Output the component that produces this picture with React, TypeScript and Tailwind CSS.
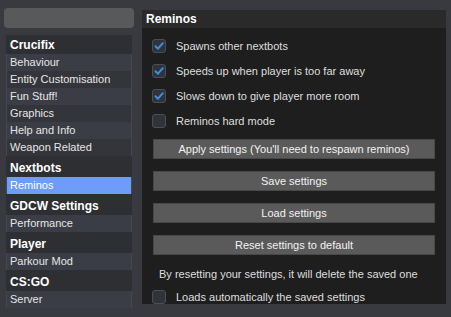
import React from 'react'

const categories = [
    { title: 'Crucifix', items: ['Behaviour', 'Entity Customisation', 'Fun Stuff!', 'Graphics', 'Help and Info', 'Weapon Related'] },
    { title: 'Nextbots', items: ['Reminos'] },
    { title: 'GDCW Settings', items: ['Performance'] },
    { title: 'Player', items: ['Parkour Mod'] },
    { title: 'CS:GO', items: ['Server'] },
]

function CheckBox({ checked }: { checked: boolean }) {
    return (
        <div className="w-[14px] h-[14px] rounded-[3px] bg-[#30333a] border border-[#4b4e56] flex items-center justify-center shrink-0">
            {checked && (
                <svg width="12" height="12" viewBox="0 0 12 12">
                    <path d="M2.5 6.2 L5 8.7 L9.8 3.2" fill="none" stroke="#3a8fe4" strokeWidth="2" strokeLinecap="round" strokeLinejoin="round" />
                </svg>
            )}
        </div>
    )
}

function CheckRow({ label, checked }: { label: string; checked: boolean }) {
    return (
        <div className="flex items-center h-[14px] gap-[10px]">
            <CheckBox checked={checked} />
            <span className="text-[#dedede] leading-none">{label}</span>
        </div>
    )
}

function Button({ label }: { label: string }) {
    return (
        <div className="ml-[1px] w-[282px] h-[20px] bg-[#5a5a5a] border border-[#484848] flex items-center justify-center text-[#f2f2f2]">
            {label}
        </div>
    )
}

export default function App() {
    return (
        <div
            className="w-[451px] h-[317px] bg-[#393a3f] flex text-[11px] overflow-hidden"
            style={{ fontFamily: '"Liberation Sans", Arial, sans-serif' }}
        >
            <div className="w-[142px] flex flex-col pl-[4px] pt-[8px] shrink-0">
                <div className="w-[130px] h-[20px] rounded-[4px] bg-[#58595b]" />
                <div className="ml-[2px] mt-[7px] w-[126px] flex flex-col bg-[#2e2f33]">
                    {categories.map((cat, ci) => (
                        <div key={cat.title} className={ci > 0 ? 'mt-[2px]' : ''}>
                            <div className="h-[19px] flex items-center pl-[4px] font-bold text-[12px] text-white">
                                {cat.title}
                            </div>
                            <div className="border-x border-[#45484f]">
                                {cat.items.map((item, i) => {
                                    const active = item === 'Reminos'
                                    return (
                                        <div
                                            key={item}
                                            className={`h-[17px] flex items-center pl-[3px] ${
                                                active
                                                    ? 'bg-[#6e9cf9] text-white'
                                                    : i % 2 === 0
                                                      ? 'bg-[#3a3d45] text-[#e6e6e6]'
                                                      : 'bg-[#33353b] text-[#e6e6e6]'
                                            }`}
                                        >
                                            {item}
                                        </div>
                                    )
                                })}
                            </div>
                        </div>
                    ))}
                </div>
            </div>

            <div className="mt-[10px] w-[304px] h-[294px] bg-[#1e1e1e] flex flex-col shrink-0">
                <div className="h-[19px] bg-[#2a2a2b] flex items-center pl-[4px] font-bold text-[12px] text-white">
                    Reminos
                </div>
                <div className="flex flex-col pl-[10px] pt-[11px]">
                    <div className="flex flex-col gap-[11px]">
                        <CheckRow label="Spawns other nextbots" checked />
                        <CheckRow label="Speeds up when player is too far away" checked />
                        <CheckRow label="Slows down to give player more room" checked />
                        <CheckRow label="Reminos hard mode" checked={false} />
                    </div>
                    <div className="flex flex-col gap-[12px] mt-[11px]">
                        <Button label="Apply settings (You'll need to respawn reminos)" />
                        <Button label="Save settings" />
                        <Button label="Load settings" />
                        <Button label="Reset settings to default" />
                    </div>
                    <div className="mt-[12px] pl-[7px] h-[14px] flex items-center text-[#dedede]">
                        By resetting your settings, it will delete the saved one
                    </div>
                    <div className="mt-[9px]">
                        <CheckRow label="Loads automatically the saved settings" checked={false} />
                    </div>
                </div>
            </div>
        </div>
    )
}
